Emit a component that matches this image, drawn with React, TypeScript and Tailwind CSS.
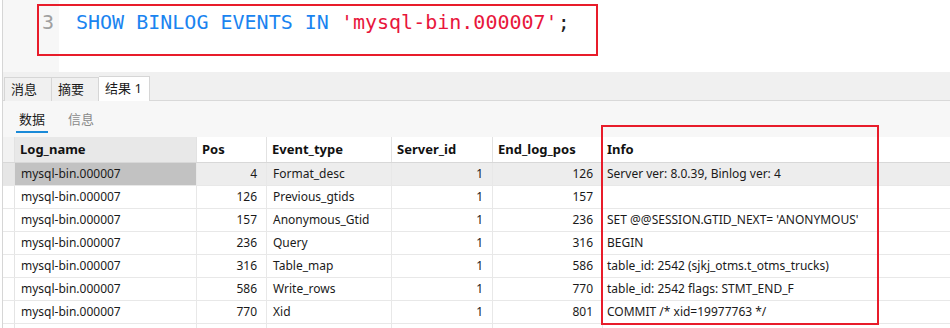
import React from "react";

const cols = "grid grid-cols-[12px_182px_70px_125px_101px_110px_1fr]";

const rows = [
  ["4", "Format_desc", "1", "126", "Server ver: 8.0.39, Binlog ver: 4"],
  ["126", "Previous_gtids", "1", "157", ""],
  ["157", "Anonymous_Gtid", "1", "236", "SET @@SESSION.GTID_NEXT= 'ANONYMOUS'"],
  ["236", "Query", "1", "316", "BEGIN"],
  ["316", "Table_map", "1", "586", "table_id: 2542 (sjkj_otms.t_otms_trucks)"],
  ["586", "Write_rows", "1", "770", "table_id: 2542 flags: STMT_END_F"],
  ["770", "Xid", "1", "801", "COMMIT /* xid=19977763 */"],
];

export default function App() {
  return (
    <div
      className="relative w-[950px] h-[328px] overflow-hidden bg-white text-[#1a1a1a]"
      style={{ fontFamily: '"Noto Sans", "Noto Sans CJK SC", sans-serif' }}
    >
      <div className="ml-[2px] h-full border-l border-[#d6d6d6] flex flex-col">
        {/* editor */}
        <div className="flex h-[72px] shrink-0">
          <div className="w-[56px] bg-[#f7f7f7] flex justify-end pr-[5px] pt-[8px]">
            <span
              className="text-[20px] leading-[28px] text-[#a0a0a0]"
              style={{ fontFamily: '"DejaVu Sans Mono", monospace' }}
            >
              3
            </span>
          </div>
          <div
            className="flex-1 pl-[17px] pt-[8px] text-[20px] leading-[28px] whitespace-pre"
            style={{ fontFamily: '"DejaVu Sans Mono", monospace' }}
          >
            <span className="text-[#1a84f0]">SHOW BINLOG EVENTS IN </span>
            <span className="text-[#e8163c]">'mysql-bin.000007'</span>
            <span className="text-[#222]">;</span>
          </div>
        </div>

        {/* tab bar */}
        <div className="h-[29px] shrink-0 bg-[#f0f0f0] border-b border-[#d9d9d9] flex items-end pl-[1px] text-[13px]">
          <div className="h-[24px] w-[48px] border border-b-0 border-[#d6d6d6] flex items-center pl-[6px] -mb-[1px] bg-[#f0f0f0]">
            消息
          </div>
          <div className="h-[24px] w-[47px] border border-b-0 border-l-0 border-[#d6d6d6] flex items-center pl-[6px] -mb-[1px] bg-[#f0f0f0]">
            摘要
          </div>
          <div className="h-[25px] w-[51px] border border-b-0 border-l-0 border-[#d6d6d6] flex items-center pl-[6px] -mb-[1px] bg-white">
            结果 1
          </div>
        </div>

        {/* sub tabs */}
        <div className="h-[36px] shrink-0 bg-[#f7f7f7] flex items-start pl-[13px] text-[13px]">
          <div className="flex flex-col items-center">
            <span className="leading-[18px] mt-[9px] px-[2px]">数据</span>
            <div className="mt-[3px] h-[2px] w-[32px] bg-[#1a8ad8]" />
          </div>
          <span className="leading-[18px] mt-[9px] ml-[20px] text-[#8a8a8a]">信息</span>
        </div>

        {/* table */}
        <div className="flex-1 text-[12px]">
          <div className={`${cols} h-[26px] border-b border-[#d8d8d8] font-bold text-[13px] text-[#111]`}>
            <div className="bg-[#f2f2f2] border-r border-[#e2e2e2]" />
            <div className="bg-[#e8e8e8] border-r border-[#e2e2e2] flex items-center pl-[5px]">Log_name</div>
            <div className="border-r border-[#e2e2e2] flex items-center pl-[5px]">Pos</div>
            <div className="border-r border-[#e2e2e2] flex items-center pl-[5px]">Event_type</div>
            <div className="border-r border-[#e2e2e2] flex items-center pl-[5px]">Server_id</div>
            <div className="border-r border-[#e2e2e2] flex items-center pl-[5px]">End_log_pos</div>
            <div className="flex items-center pl-[4px]">Info</div>
          </div>
          {rows.map((r, i) => {
            const sel = i === 0;
            return (
              <div
                key={i}
                className={`${cols} h-[23px] border-b border-[#e8e8e8] ${sel ? "bg-[#ededed]" : "bg-white"}`}
              >
                <div className={`border-r border-[#e4e4e4] ${sel ? "bg-[#e6e6e6]" : ""}`} />
                <div className={`border-r border-[#e8e8e8] flex items-center pl-[6px] ${sel ? "bg-[#c2c2c2]" : ""}`}>
                  mysql-bin.000007
                </div>
                <div className="border-r border-[#e8e8e8] flex items-center justify-end pr-[9px]">{r[0]}</div>
                <div className="border-r border-[#e8e8e8] flex items-center pl-[6px]">{r[1]}</div>
                <div className="border-r border-[#e8e8e8] flex items-center justify-end pr-[9px]">{r[2]}</div>
                <div className="border-r border-[#e8e8e8] flex items-center justify-end pr-[9px]">{r[3]}</div>
                <div className="flex items-center pl-[4px] whitespace-nowrap overflow-hidden w-[272px]">{r[4]}</div>
              </div>
            );
          })}
          <div className={`${cols} h-[10px]`}>
            <div className="border-r border-[#e4e4e4]" />
            <div className="border-r border-[#e8e8e8]" />
            <div className="border-r border-[#e8e8e8]" />
            <div className="border-r border-[#e8e8e8]" />
            <div className="border-r border-[#e8e8e8]" />
            <div className="border-r border-[#e8e8e8]" />
            <div />
          </div>
        </div>
      </div>

      {/* annotation boxes */}
      <div className="absolute left-[37px] top-[4px] w-[561px] h-[52px] border-2 border-[#e81c2a]" />
      <div className="absolute left-[601px] top-[125px] w-[278px] h-[200px] border-2 border-[#e81c2a]" />
    </div>
  );
}
